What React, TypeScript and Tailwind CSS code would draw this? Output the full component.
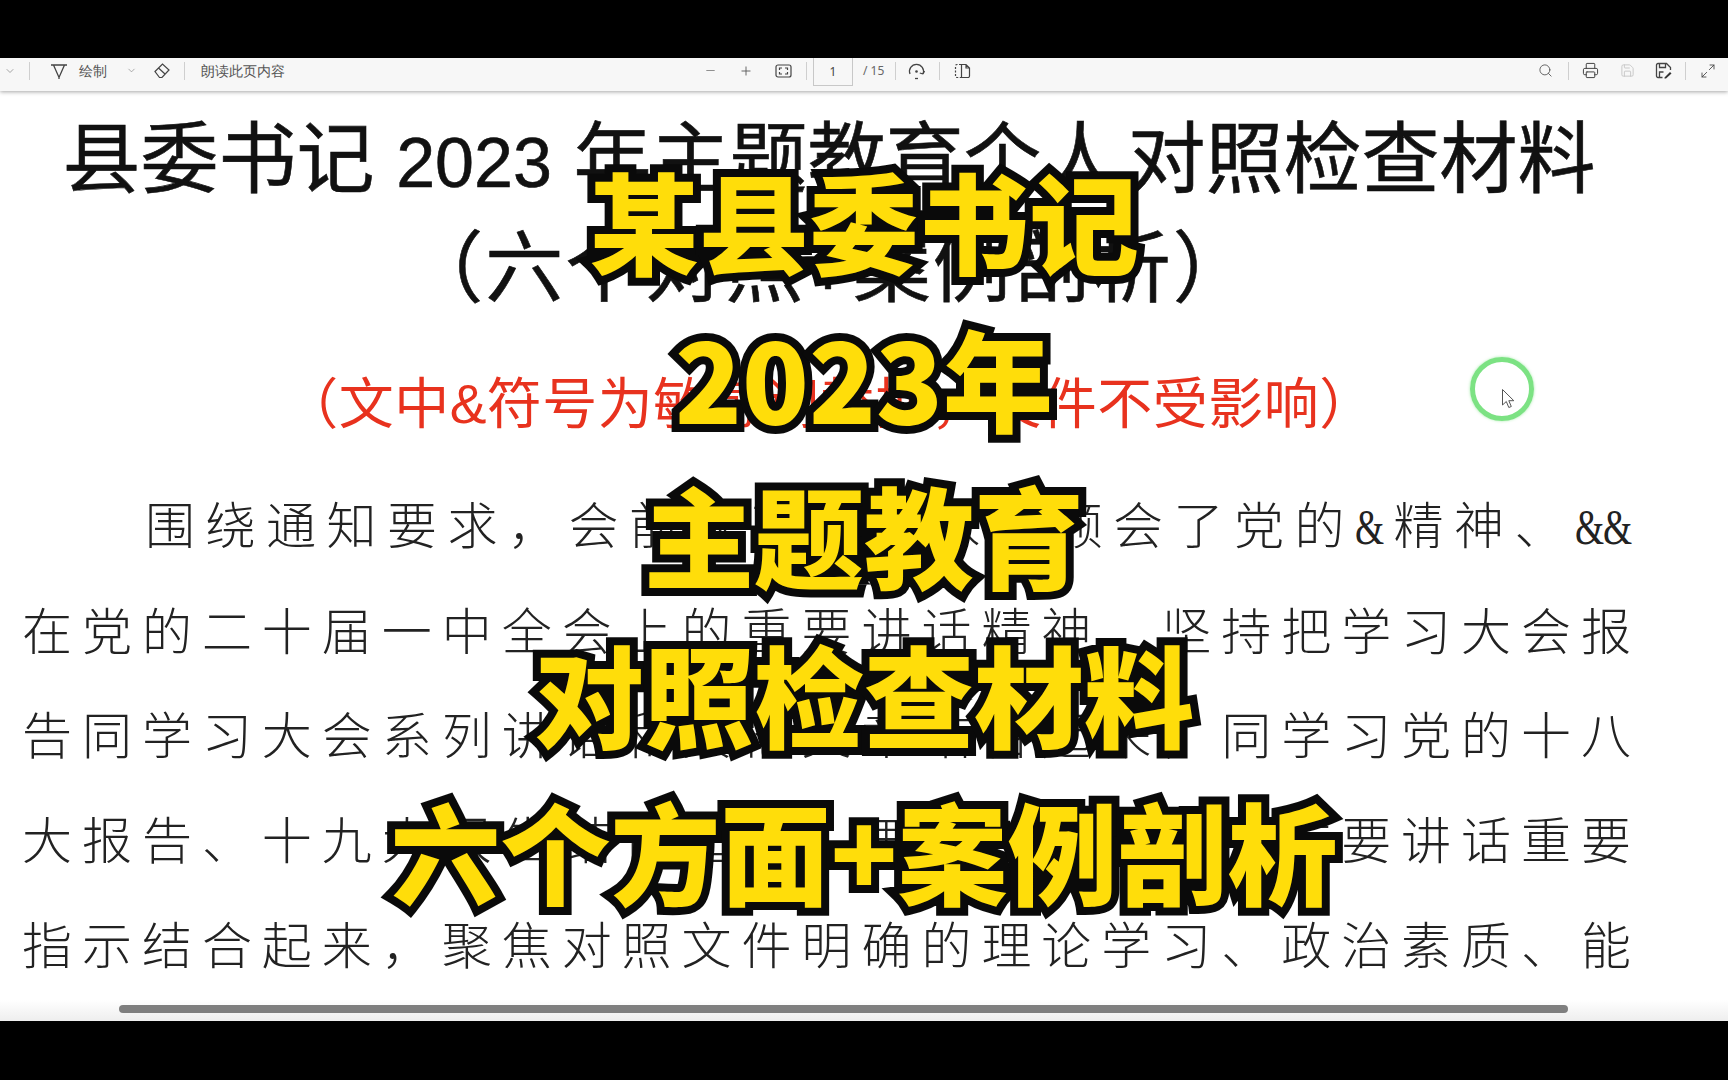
import { ChevronDown, Minus, Plus, Search, Printer, Save, Maximize2 } from "lucide-react";

const docFont = "font-['Liberation_Sans','Noto_Sans_CJK_SC',sans-serif]";
const bodyFont = "font-['Liberation_Serif','Noto_Sans_CJK_SC',serif]";

const headlines = [
  { text: "某县委书记", cls: "" },
  { text: "2023年", cls: "" },
  { text: "主题教育", cls: "" },
  { text: "对照检查材料", cls: "mt-[2px]" },
  { text: "六个方面+案例剖析", cls: "" },
];

const bodyLines = [
  "在党的二十届一中全会上的重要讲话精神，坚持把学习大会报",
  "告同学习大会系列讲话和其他文章结合起来，同学习党的十八",
  "大报告、十九大报告结合起来，再同学习党中央重要讲话重要",
  "指示结合起来，聚焦对照文件明确的理论学习、政治素质、能",
];

function Sep({ className }: { className: string }) {
  return <span className={`w-px h-[18px] bg-[#cfcfcf] shrink-0 ${className}`} />;
}

function Amp() {
  return <span className="inline-block w-[28px] origin-left scale-x-75">&amp;</span>;
}

function Toolbar() {
  return (
    <div className="h-[33px] shrink-0 relative z-10 bg-[#f7f7f7] pb-[8px] flex items-center text-[#555] text-[14px] shadow-[0_1px_4px_rgba(0,0,0,0.35)]">
      <ChevronDown size={12} strokeWidth={1.5} className="ml-[4px] text-[#888]" />
      <Sep className="ml-[13px]" />
      <svg className="ml-[20px]" width="18" height="18" viewBox="0 0 18 18" fill="none" stroke="#444" strokeWidth="1.3">
        <path d="M1 3h16M3.500 3 9 15.500 14.500 3M9 15.500V17" />
      </svg>
      <span className="ml-[11px] w-[28px] whitespace-nowrap">绘制</span>
      <ChevronDown size={11} strokeWidth={1.5} className="ml-[19px] text-[#888]" />
      <svg className="ml-[16px]" width="18" height="18" viewBox="0 0 18 18" fill="none" stroke="#444" strokeWidth="1.2">
        <path d="M2 9.500 9.500 2 16 8l-7 7.500H6.500zM5.500 6l6.500 6" />
      </svg>
      <Sep className="ml-[13px]" />
      <span className="ml-[16px] w-[84px] whitespace-nowrap">朗读此页内容</span>

      <Minus size={13} strokeWidth={1.5} className="ml-[419px] text-[#777]" />
      <Plus size={14} strokeWidth={1.5} className="ml-[22px] text-[#555]" />
      <svg className="ml-[22px]" width="17" height="14" viewBox="0 0 17 14" fill="none" stroke="#444" strokeWidth="1.2">
        <rect x="1" y="1" width="15" height="12" rx="2" />
        <path d="M4.500 6V4H7M10 4h2.500v2M12.500 8v2H10M7 10H4.500V8" />
      </svg>
      <Sep className="ml-[14px]" />
      <div className="ml-[6px] w-[40px] h-[28px] -mb-[8px] self-start border-x border-b border-[#c8c8c8] flex items-center justify-center text-[12px] text-[#444]">
        1
      </div>
      <span className="ml-[10px] w-[22px] text-[12px] text-[#666] whitespace-nowrap">/ 15</span>
      <Sep className="ml-[10px]" />
      <svg className="ml-[11px]" width="19" height="18" viewBox="0 0 19 18" fill="none" stroke="#444" strokeWidth="1.3">
        <path d="M3 12a7 7 0 1 1 13 0M16 12l-3.200-1M16 12l1.500-3" />
        <circle cx="9.500" cy="9.500" r="1.300" fill="#444" stroke="none" />
        <path d="M8 16.500h3" />
      </svg>
      <Sep className="ml-[13px]" />
      <svg className="ml-[14px]" width="17" height="16" viewBox="0 0 17 16" fill="none" stroke="#444" strokeWidth="1.2">
        <path d="M7 1.500H3A1.500 1.500 0 0 0 1.500 3v10A1.500 1.500 0 0 0 3 14.500h4" strokeDasharray="2 1.500" />
        <path d="M7.500 1.500H12l3.500 3.500v8a1.500 1.500 0 0 1-1.500 1.500H7.500zM12 1.500V5h3.500" />
      </svg>

      <Search size={15} strokeWidth={1.4} className="ml-[567px] text-[#555]" />
      <Sep className="ml-[15px]" />
      <Printer size={17} strokeWidth={1.4} className="ml-[13px] text-[#444]" />
      <Save size={15} strokeWidth={1.4} className="ml-[21px] text-[#c4c4c4]" />
      <svg className="ml-[20px]" width="17" height="17" viewBox="0 0 17 17" fill="none" stroke="#444" strokeWidth="1.3">
        <path d="M7.500 15.500H3A1.500 1.500 0 0 1 1.500 14V3A1.500 1.500 0 0 1 3 1.500h8.500l4 4V8M4.500 1.500V5.500H10.500V1.500M4.500 15.500V10h4" />
        <path d="M9.500 15.500 15 10l1.500 1.500L11 16.500H9.500z" fill="#333" stroke="none" />
      </svg>
      <Sep className="ml-[13px]" />
      <Maximize2 size={16} strokeWidth={1.3} className="ml-[14px] text-[#444]" />
    </div>
  );
}

export default function App() {
  return (
    <div className="relative h-[1080px] w-[1728px] bg-black pt-[58px] pb-[59px] flex flex-col overflow-hidden">
      <Toolbar />

      <div className="flex-1 bg-white overflow-hidden">
        <div className={`${docFont} text-center text-[#111] pr-[70px]`}>
          <h1 className="mt-[17px] text-[78px] leading-[105px] whitespace-nowrap [-webkit-text-stroke:0.6px_#111]">
            县委书记 <span className="text-[70px] leading-none">2023</span> 年主题教育个人<span className="ml-[8px]">对照检查材料</span>
          </h1>
          <h2 className="mt-[4px] text-[78px] leading-[105px] tracking-[2px] whitespace-nowrap [-webkit-text-stroke:0.6px_#111]">（六个对照+案例剖析）</h2>
          <p className="mt-[30px] text-[55px] leading-[105px] tracking-[0.5px] text-[#e8321e] whitespace-nowrap">（文中&amp;符号为敏感词替换，文件不受影响）</p>
        </div>
        <div className={`${bodyFont} mt-[19px] pl-[22px] pr-[97px] text-[50px] leading-[104.7px] text-[#222] font-light`}>
          <p className="pl-[123px] -mt-[1px] mb-[1px] [text-align-last:justify]">
            围绕通知要求，会前认真学习深入领会了党的<Amp />精神、<Amp /><Amp />
          </p>
          {bodyLines.map((line) => (
            <p key={line} className="[text-align-last:justify]">{line}</p>
          ))}
        </div>
      </div>

      <div className="h-[21px] shrink-0 bg-gradient-to-b from-white to-[#eeeeee] pl-[119px] pr-[160px] pt-[5px]">
        <div className="h-[8px] rounded-full bg-[#7f7f7f]" />
      </div>

      <div className="absolute inset-x-0 top-[140px] flex flex-col items-center font-['Noto_Sans_CJK_SC',sans-serif]">
        {headlines.map((h) => (
          <div
            key={h.text}
            className={`${h.cls} h-[157px] flex items-center whitespace-nowrap text-[110px] leading-none font-black text-[#ffdd0a] [-webkit-text-stroke:16px_#0a0a0a] [paint-order:stroke_fill]`}
          >
            {h.text}
          </div>
        ))}
      </div>

      <div className="absolute left-[1470px] top-[357px] size-[64px] rounded-full border-[5px] border-[#7ce283] shadow-[0_0_3px_rgba(124,226,131,0.7)]" />
      <svg className="absolute left-[1501px] top-[388px]" width="15" height="22" viewBox="0 0 15 22" fill="#fff" stroke="#555" strokeWidth="1">
        <path d="M1.500 1.500v15.500l3.800-3.500 2.500 6 2.500-1-2.500-5.800h5z" />
      </svg>
    </div>
  );
}
